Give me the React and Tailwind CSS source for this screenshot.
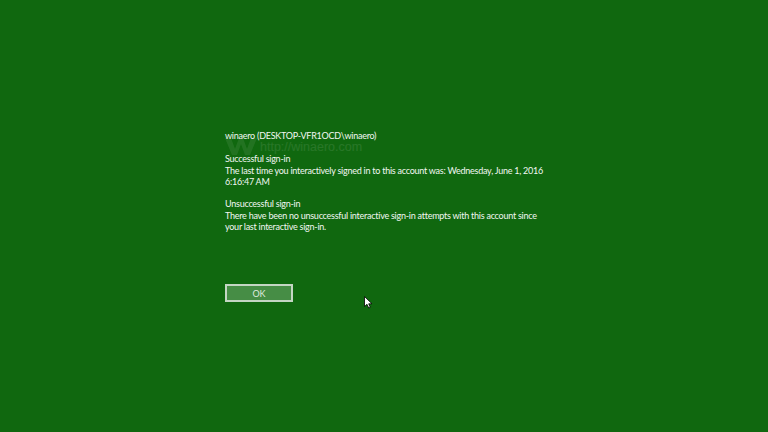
export default function App() {
  return (
    <div className="relative w-[768px] h-[432px] bg-[#10680f] overflow-hidden" style={{ fontFamily: 'Lato, sans-serif' }}>
      <div className="pl-[225px] pt-[130px] text-[9px] leading-[11.3px] tracking-[-0.25px] text-[#f2f7f2]">
        <div className="relative">
          <p>winaero (DESKTOP-VFR1OCD\winaero)</p>
          {/* faint site watermark */}
          <svg className="absolute left-0 top-[8px] pointer-events-none" width="32" height="17" viewBox="0 0 32 17">
            <path d="M0 0 H6 L10 11 L14 0 H18 L22 11 L26 0 H32 L25 17 H20 L16 6 L12 17 H7 Z" fill="rgba(255,255,255,0.08)" />
          </svg>
          <span className="absolute left-[35px] top-[11.6px] text-[12.5px] leading-[11px] tracking-normal text-white/10 pointer-events-none" style={{ fontFamily: '"Liberation Sans", sans-serif' }}>http://winaero.com</span>
          <p className="mt-[12px]">Successful sign-in</p>
          <p>The last time you interactively signed in to this account was: Wednesday, June 1, 2016</p>
          <p>6:16:47 AM</p>
          <p className="mt-[11.3px]">Unsuccessful sign-in</p>
          <p>There have been no unsuccessful interactive sign-in attempts with this account since</p>
          <p>your last interactive sign-in.</p>
        </div>
        <button className="mt-[52px] w-[68px] h-[18px] border-2 border-[#c4d6c3] bg-[#468d45] text-[9px] leading-none tracking-normal text-[#dfeadf] flex items-center justify-center">
          OK
        </button>
      </div>
      {/* mouse pointer */}
      <svg className="absolute left-[364px] top-[296px]" width="9" height="13" viewBox="0 0 9 13">
        <path d="M0.5 0.5 L0.5 10.5 L3 8.3 L4.7 12 L6.3 11.3 L4.7 7.8 L8 7.8 Z" fill="#fff" stroke="#000" strokeWidth="0.8" strokeLinejoin="round" />
      </svg>
    </div>
  );
}
